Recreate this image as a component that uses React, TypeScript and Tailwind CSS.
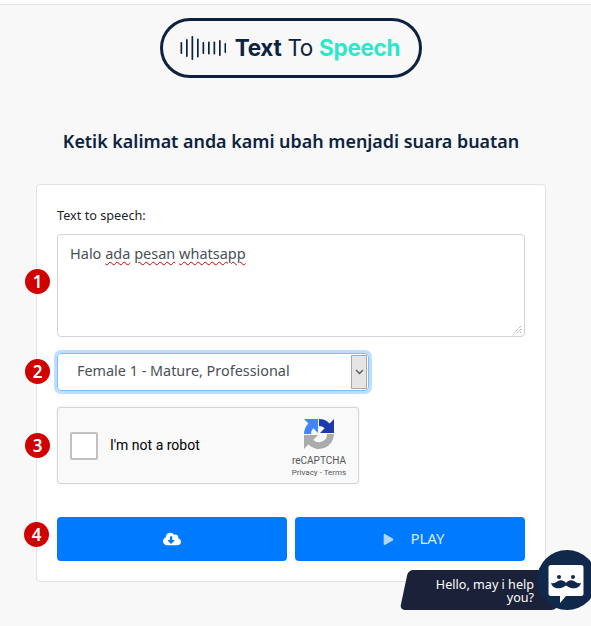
import React from "react";
import { FaCloudDownloadAlt, FaPlay } from "react-icons/fa";

const font = "font-['Noto_Sans','Liberation_Sans',sans-serif]";
const squiggle = "underline decoration-[#d00000] decoration-wavy decoration-1 underline-offset-[2px]";

// red numbered marker beside each form row
const Marker = ({ n, top }: { n: number; top: string }) => (
  <span
    className={`absolute left-[-33px] ${top} flex h-[25px] w-[25px] items-center justify-center rounded-full bg-[#d10000] text-[17px] font-semibold leading-none text-white`}
  >
    {n}
  </span>
);

const Wave = () => {
  const bars = [12, 18, 24, 19, 12, 13, 13, 16, 10];
  return (
    <svg width="46" height="24" viewBox="0 0 46 24" className="shrink-0">
      {bars.map((h, i) => (
        <rect key={i} x={i * 5.5 + 0.5} y={12 - h / 2} width="1.7" height={h} rx="0.8" fill="#0c2340" />
      ))}
    </svg>
  );
};

const Recaptcha = () => (
  <svg width="32" height="32" viewBox="0 0 32 32">
    <path d="M31 16A15 15 0 0 1 5.400 26.600L1 31V17H15L10.300 21.700A8 8 0 0 0 24 16Z" fill="#ababab" />
    <path d="M16 1A15 15 0 0 1 26.600 5.400L31 1V15H17L21.700 10.300A8 8 0 0 0 16 8Z" fill="#1c3aa9" />
    <path d="M16 1A15 15 0 0 1 26.600 5.400L31 1V15H17L21.700 10.300A8 8 0 0 0 16 8Z" fill="#4285f4" transform="rotate(-90 16 16)" />
  </svg>
);

const ChatIcon = () => (
  <svg width="36" height="38" viewBox="0 0 36 38">
    <path d="M3 0h30a2.500 2.500 0 0 1 2.500 2.500v26a2.500 2.500 0 0 1-2.500 2.500H18l-6 7v-7H3a2.500 2.500 0 0 1-2.500-2.500v-26A2.500 2.500 0 0 1 3 0z" fill="#fff" />
    <circle cx="11" cy="12" r="2" fill="#10284a" />
    <circle cx="25" cy="12" r="2" fill="#10284a" />
    <path d="M18 18c2-2.500 5-3.500 8-2 2 1.200 4 3 7 2-1 4-5 6-9 5.200-2.800-.5-4.500-1.700-6-2.700-1.500 1-3.200 2.200-6 2.700-4 .8-8-1.200-9-5.200 3 1 5-.8 7-2 3-1.500 6-.5 8 2z" fill="#10284a" />
  </svg>
);

export default function App() {
  return (
    <div className={`${font} relative h-[626px] w-[591px] overflow-hidden bg-[#f8f8f8] text-[#212529]`}>
      <div className="h-[5px] border-b border-[#e4e4e4] bg-white" />

      {/* logo */}
      <div className="ml-[160px] mt-[13px] flex h-[60px] w-[262px] items-center justify-center gap-[9px] rounded-full border-[3px] border-[#0c2340]">
        <Wave />
        <span className="mr-[2px] font-['Inter',sans-serif] text-[22.500px] leading-none tracking-[-0.3px] text-[#0c2340]">
          <b className="font-bold">Text</b> To <b className="font-bold text-[#2ee6c8]">Speech</b>
        </span>
      </div>

      <h1 className="mt-[51px] w-[582px] text-center text-[17.900px] font-semibold leading-6 text-[#0c2340]">
        Ketik kalimat anda kami ubah menjadi suara buatan
      </h1>

      {/* form card */}
      <div className="ml-[36px] mt-[31px] h-[398px] w-[510px] rounded-[4px] border border-[#e2e2e2] bg-white px-[20px] pt-[21px]">
        <p className="text-[12.700px] leading-[18px]">Text to speech:</p>

        <div className="relative mt-[10px] h-[103px] w-[468px] rounded-[4px] border border-[#ced4da] px-[12px] py-[6px] text-[14.500px] leading-[24px] text-[#495057]">
          Halo <span className={squiggle}>ada</span> <span className={squiggle}>pesan</span>{" "}
          <span className={squiggle}>whatsapp</span>
          <svg width="9" height="9" viewBox="0 0 9 9" className="absolute bottom-[2px] right-[2px]">
            <path d="M8 1 1 8M8 4 4 8M8 7 7 8" stroke="#8a8a8a" strokeWidth="1" strokeDasharray="1 1" />
          </svg>
          <Marker n={1} top="top-[34px]" />
        </div>

        <div className="relative mt-[16px] flex h-[38px] w-[312px] items-center rounded-[4px] border border-[#80bdff] pl-[19px] pr-[1px] text-[14.400px] text-[#495057] shadow-[0_0_0_3px_rgba(0,123,255,0.25)]">
          <span className="mb-[2px] grow">Female 1 - Mature, Professional</span>
          <span className="flex h-[34px] w-[16px] items-center justify-center border border-[#a9a9a9] bg-[#e5e5e5]">
            <svg width="9" height="6" viewBox="0 0 9 6">
              <path d="M1 1l3.500 3.500L8 1" fill="none" stroke="#555" strokeWidth="1.300" />
            </svg>
          </span>
          <Marker n={2} top="top-[5px]" />
        </div>

        <div className="relative mt-[16px] flex h-[77px] w-[302px] items-center rounded-[3px] border border-[#d6d6d6] bg-[#f9f9f9] pl-[12px] shadow-[0_0_3px_rgba(0,0,0,0.08)]">
          <span className="h-[28px] w-[28px] rounded-[2px] border-2 border-[#c1c1c1] bg-white" />
          <span className="ml-[12px] grow font-['Roboto',sans-serif] text-[14px] text-black">I'm not a robot</span>
          <div className="mr-[10px] mt-[4px] flex w-[58px] flex-col items-center font-['Roboto',sans-serif] text-[#555]">
            <Recaptcha />
            <span className="mt-[5px] text-[10px] leading-[12px]">reCAPTCHA</span>
            <span className="whitespace-nowrap text-[8px] leading-[11px]">Privacy - Terms</span>
          </div>
          <Marker n={3} top="top-[25px]" />
        </div>

        <div className="relative mt-[33px] flex w-[468px] gap-[8px]">
          <button className="flex h-[44px] w-[230px] items-center justify-center rounded-[4px] bg-[#007bff] text-white">
            <FaCloudDownloadAlt className="text-[18px]" />
          </button>
          <button className="flex h-[44px] w-[230px] items-center justify-center gap-[16px] rounded-[4px] bg-[#007bff] pl-[8px] text-[15px] text-[#d6e9ff]">
            <FaPlay className="text-[11px] text-[#b5d6fb]" />
            <span className="mb-[1px]">PLAY</span>
          </button>
          <Marker n={4} top="top-[5px]" />
        </div>
      </div>

      {/* chat widget */}
      <div className="absolute left-[399px] top-[570px] h-[40px] w-[162px] pr-[27px] pt-[8px] text-right text-[12.600px] leading-[13px] text-white">
        <div className="absolute inset-y-0 left-[5px] right-0 -skew-x-[12deg] rounded-[5px] bg-[#1b2138]" />
        <p className="relative">Hello, may i help</p>
        <p className="relative">you?</p>
      </div>
      <div className="absolute left-[537px] top-[550px] flex h-[60px] w-[60px] items-start justify-center rounded-full bg-[#10284a] pr-[2px] pt-[15px]">
        <ChatIcon />
      </div>
    </div>
  );
}
